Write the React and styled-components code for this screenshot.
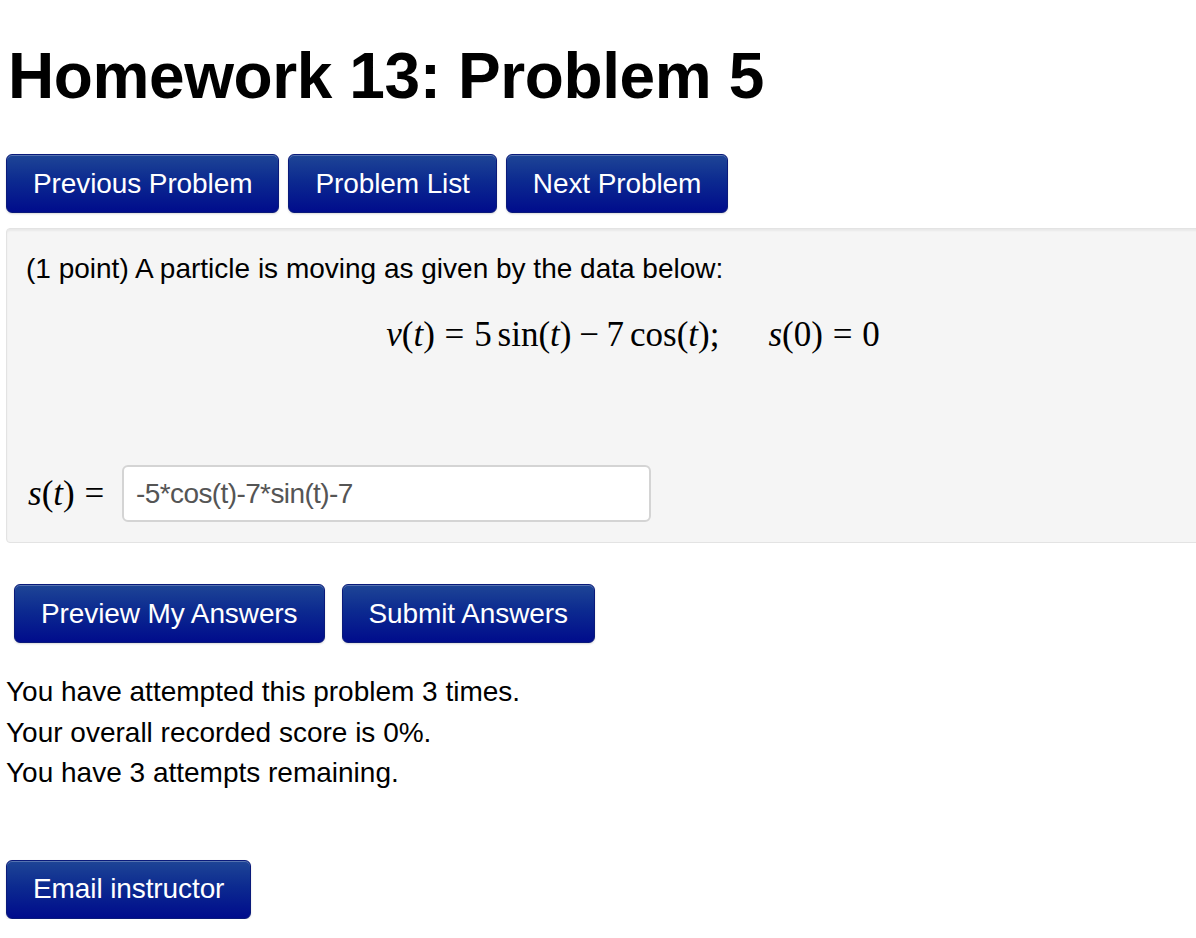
import React from "react";
import styled, { createGlobalStyle } from "styled-components";

const Global = createGlobalStyle`
  html, body {
    margin: 0;
    background: #fff;
    overflow: hidden;
  }
  body {
    font-family: "Liberation Sans", Arial, Helvetica, sans-serif;
    color: #000;
  }
`;

const Page = styled.div`
  padding: 0 0 0 6px;
`;

const Title = styled.h1`
  margin: 38px 0 40px 2px;
  font-size: 64px;
  font-weight: bold;
  line-height: 76px;
  letter-spacing: -0.4px;
`;

const ButtonRow = styled.div`
  display: flex;
  gap: ${(p) => p.gap || 9}px;
  margin-left: ${(p) => p.indent || 0}px;
`;

const Button = styled.button`
  height: 59px;
  padding: 0 ${(p) => p.pad || 26}px;
  border: 1px solid #0a1a7a;
  border-radius: 6px;
  background: linear-gradient(#1e4596 0%, #0c2a90 45%, #000c8c 100%);
  box-shadow: inset 0 1px 0 rgba(255, 255, 255, 0.25), 0 1px 2px rgba(0, 0, 0, 0.15);
  color: #fff;
  font-family: "Liberation Sans", Arial, sans-serif;
  font-size: 28px;
  line-height: 1;
  letter-spacing: -0.1px;
  cursor: pointer;
  white-space: nowrap;
`;

const Panel = styled.div`
  margin-top: 15px;
  width: 1254px;
  box-sizing: border-box;
  padding: 24px 19px 20px;
  background: #f5f5f5;
  border: 1px solid #e3e3e3;
  border-radius: 4px;
  box-shadow: inset 0 2px 2px rgba(0, 0, 0, 0.05);
`;

const Prompt = styled.div`
  font-size: 28px;
  line-height: 32px;
`;

const Display = styled.div`
  margin-top: 30px;
  height: 150px;
  text-align: center;
  font-family: "Liberation Serif", "Times New Roman", serif;
  font-size: 35px;
  line-height: 40px;
  white-space: nowrap;
`;

const V = styled.i`
  font-style: italic;
`;

const Rel = styled.span`
  margin: 0 0.28em;
`;

const Op = styled.span`
  margin: 0 0.22em;
`;

const Thin = styled.span`
  display: inline-block;
  width: ${(p) => p.w || 0.17}em;
`;

const AnswerRow = styled.div`
  display: flex;
  align-items: center;
  gap: 8px;
`;

const Label = styled.span`
  font-family: "Liberation Serif", "Times New Roman", serif;
  font-size: 35px;
  padding-left: 2px;
  white-space: nowrap;
`;

const Input = styled.input`
  width: 529px;
  height: 57px;
  box-sizing: border-box;
  padding: 0 12px;
  border: 2px solid #d4d4d4;
  border-radius: 6px;
  background: #fff;
  color: #555;
  font-family: "Liberation Sans", Arial, sans-serif;
  font-size: 28px;
  letter-spacing: -0.6px;
  outline: none;
`;

const Actions = styled(ButtonRow)`
  margin-top: 41px;
`;

const Status = styled.div`
  margin-top: 29px;
  font-size: 28px;
  line-height: 40.5px;
`;

const EmailRow = styled.div`
  margin-top: 66px;
`;

export default function App() {
  return (
    <Page>
      <Global />
      <Title>Homework 13: Problem 5</Title>
      <ButtonRow>
        <Button>Previous Problem</Button>
        <Button>Problem List</Button>
        <Button>Next Problem</Button>
      </ButtonRow>
      <Panel>
        <Prompt>(1 point) A particle is moving as given by the data below:</Prompt>
        <Display>
          <V>v</V>(<V>t</V>)<Rel>=</Rel>5<Thin />sin(<V>t</V>)<Op>−</Op>7<Thin />cos(<V>t</V>);
          <Thin w={1.4} />
          <V>s</V>(0)<Rel>=</Rel>0
        </Display>
        <AnswerRow>
          <Label>
            <V>s</V>(<V>t</V>)<Rel>=</Rel>
          </Label>
          <Input defaultValue="-5*cos(t)-7*sin(t)-7" />
        </AnswerRow>
      </Panel>
      <Actions indent={8} gap={17}>
        <Button>Preview My Answers</Button>
        <Button>Submit Answers</Button>
      </Actions>
      <Status>
        You have attempted this problem 3 times.
        <br />
        Your overall recorded score is 0%.
        <br />
        You have 3 attempts remaining.
      </Status>
      <EmailRow>
        <Button>Email instructor</Button>
      </EmailRow>
    </Page>
  );
}
